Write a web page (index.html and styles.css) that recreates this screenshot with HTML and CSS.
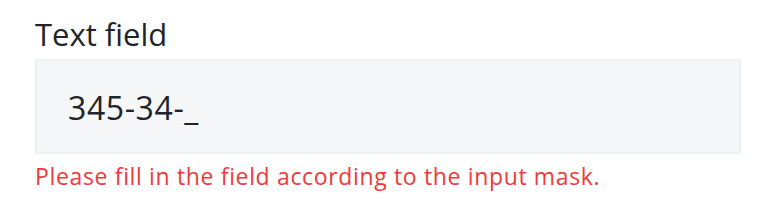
FILE: index.html
```html
<!DOCTYPE html>
<html lang="en">
<head>
  <meta charset="UTF-8">
  <title>Text field</title>
  <link rel="stylesheet" href="styles.css">
</head>
<body>

  <div class="field">
    <label class="field-label" for="maskInput">Text field</label>
    <input class="field-input" type="text" id="maskInput" value="345-34-_">
    <div class="field-error">Please fill in the field according to the input mask.</div>
  </div>

</body>
</html>
```

FILE: styles.css
```css
body {
  background: #fff;
  font-family: 'Open Sans', 'Noto Sans', sans-serif;
  color: #212529;
  margin: 0;
  padding: 0;
}

.field {
  display: flex;
  flex-direction: column;
  width: 706px;
  padding: 11px 0 0 35px;
}

.field-label {
  font-size: 31px;
  line-height: 46px;
  margin-bottom: 2px;
}

.field-input {
  box-sizing: border-box;
  width: 706px;
  height: 95px;
  padding: 2px 0 0 31px;
  font-family: inherit;
  font-size: 32px;
  letter-spacing: 0.6px;
  color: #212529;
  background-color: #f6f7f9;
  border: 2px solid #eeeff0;
  border-radius: 0;
  outline: none;
}

.field-error {
  font-size: 23px;
  letter-spacing: 0.65px;
  line-height: 30px;
  margin-top: 7px;
  color: #f03a3a;
}
```
